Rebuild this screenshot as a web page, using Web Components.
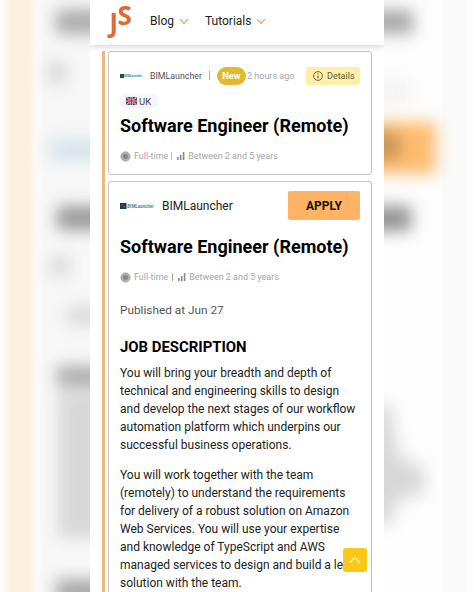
<!DOCTYPE html>
<html lang="en">
<head>
<meta charset="utf-8">
<title>Job details</title>
<style>
  body {
    margin: 0;
    width: 474px;
    height: 592px;
    overflow: hidden;
    background: #fdfdfd;
    font-family: Roboto, "Liberation Sans", sans-serif;
    color: #111;
  }
</style>
</head>
<body>
<job-page></job-page>

<script>
class BlurBackdrop extends HTMLElement {
  constructor() {
    super();
    this.attachShadow({ mode: 'open' });
    this.shadowRoot.innerHTML = `
      <style>
        :host { display: block; }
        svg { display: block; }
      </style>
      <svg width="474" height="592" viewBox="0 0 474 592">
        <defs>
          <filter id="soft" filterUnits="userSpaceOnUse" x="-40" y="-40" width="560" height="700" color-interpolation-filters="sRGB"><feGaussianBlur stdDeviation="8"/></filter>
          <filter id="edge" x="-50%" y="-5%" width="200%" height="110%" color-interpolation-filters="sRGB"><feGaussianBlur stdDeviation="3 0"/></filter>
        </defs>
        <rect width="474" height="592" fill="#fdfdfd"/>
        <rect x="38" width="60" height="592" fill="#f8f8f8" filter="url(#edge)"/>
        <rect x="6" y="-20" width="27" height="640" fill="#ffefe2" filter="url(#edge)"/>
        <rect x="442" width="25" height="592" fill="#fafafa"/>
        <g filter="url(#soft)">
          <rect x="56" y="10" width="60" height="24" fill="#aaa"/>
          <rect x="48" y="62" width="19" height="22" fill="#d8d8d8"/>
          <rect x="49" y="138" width="60" height="23" fill="#d8e5e9"/>
          <rect x="57" y="206" width="60" height="24" fill="#9a9a9a"/>
          <rect x="50" y="256" width="20" height="20" fill="#dadada"/>
          <rect x="67" y="306" width="40" height="19" fill="#dadada"/>
          <rect x="57" y="366" width="60" height="21" fill="#acacac"/>
          <rect x="58" y="392" width="60" height="146" fill="#d8d8d8"/>
          <rect x="56" y="579" width="60" height="30" fill="#aaa"/>
          <rect x="360" y="10" width="53" height="24" fill="#a8a8a8"/>
          <rect x="360" y="80" width="50" height="24" fill="#f4f4f4"/>
          <rect x="360" y="122" width="76" height="52" fill="#ffbc70"/>
          <rect x="360" y="132" width="40" height="28" fill="#ca9457"/>
          <rect x="360" y="206" width="51" height="25" fill="#929292"/>
          <path d="M360 406H391L398 455L424 468V493L398 500L391 524H360Z" fill="#d8d8d8"/>
        </g>
      </svg>
    `;
  }
}

class NavItem extends HTMLElement {
  constructor() {
    super();
    this.attachShadow({ mode: 'open' });
    this.shadowRoot.innerHTML = `
      <style>
        :host { display: flex; align-items: center; gap: 5px; font-size: 12px; color: #222; }
        svg { margin-top: 1px; }
      </style>
      <span><slot></slot></span>
      <svg width="10" height="7" viewBox="0 0 10 7"><path d="M1 1.2 5 5.4 9 1.2" fill="none" stroke="#e39a72" stroke-width="1.1"/></svg>
    `;
  }
}

class SiteHeader extends HTMLElement {
  constructor() {
    super();
    this.attachShadow({ mode: 'open' });
    this.shadowRoot.innerHTML = `
      <style>
        :host {
          display: flex;
          align-items: center;
          box-sizing: border-box;
          height: 45px;
          padding: 0 0 4px 17px;
          background: #fff;
          box-shadow: 0 1px 7px rgba(0, 0, 0, 0.2);
          position: relative;
        }
        .logo { display: block; width: 26px; height: 40px; margin-right: 17px; overflow: visible; }
        nav { display: flex; gap: 16px; }
      </style>
      <svg class="logo" viewBox="0 0 26 40" fill="#de6b35" font-family="Open Sans, Noto Sans, sans-serif" font-size="26" font-weight="700">
        <text x="2.4" y="31.2">J</text>
        <text x="10.6" y="23.8">S</text>
      </svg>
      <nav>
        <nav-item>Blog</nav-item>
        <nav-item>Tutorials</nav-item>
      </nav>
    `;
  }
}

class CompanyLogo extends HTMLElement {
  constructor() {
    super();
    this.attachShadow({ mode: 'open' });
    this.shadowRoot.innerHTML = `
      <style>
        :host { display: block; width: 35px; height: 6px; }
        svg { display: block; width: 100%; height: 100%; overflow: visible; }
      </style>
      <svg viewBox="0 0 35 6">
        <rect width="6.5" height="6" fill="#1e3f48"/>
        <path d="M1.6 1.4h1.6v1.4H1.6zM3.6 3.2h1.6v1.3H3.6z" fill="#55777f"/>
        <text x="7.3" y="5" font-size="5.4" font-weight="700" font-style="italic" fill="#3f8ba3" textLength="26.5" lengthAdjust="spacingAndGlyphs">BIMLauncher</text>
      </svg>
    `;
  }
}

class JobMeta extends HTMLElement {
  constructor() {
    super();
    this.attachShadow({ mode: 'open' });
    this.shadowRoot.innerHTML = `
      <style>
        :host { display: flex; align-items: center; height: 12px; font-size: 8.95px; line-height: 12px; color: #a6a6a6; white-space: nowrap; }
        .gear { margin-right: 3px; }
        .sep { width: 1px; height: 8px; margin: 0 5px 0 var(--sep-gap, 3px); background: var(--sep, #c4c4c4); }
        .bars { margin-right: 3px; }
      </style>
      <svg class="gear" width="11" height="11" viewBox="0 0 11 11">
        <circle cx="5.5" cy="5.5" r="4.7" fill="#b0b0b0" stroke="#a5a5a5" stroke-width="1" stroke-dasharray="1.3 .6"/>
        <circle cx="5.5" cy="5.5" r="2.4" fill="#858585" stroke="#8f8f8f" stroke-width=".8"/>
      </svg>
      <span>Full-time</span>
      <i class="sep"></i>
      <svg class="bars" width="8" height="8" viewBox="0 0 8 8" fill="#888"><path d="M0 5h1.6v3H0zM2.9 3h1.6v5H2.9zM5.8 0h1.6v8H5.8z"/></svg>
      <span>Between 2 and 5 years</span>
    `;
  }
}

class JobSummary extends HTMLElement {
  constructor() {
    super();
    this.attachShadow({ mode: 'open' });
    this.shadowRoot.innerHTML = `
      <style>
        :host {
          display: block;
          flex: none;
          box-sizing: border-box;
          height: 124px;
          padding: 14px 11px 0 11px;
          background: #fff;
          border: 1px solid #c6c6c6;
          border-radius: 3px;
        }
        .top { display: flex; align-items: center; height: 19px; font-size: 9px; white-space: nowrap; }
        company-logo { width: 23px; height: 4px; margin-right: 7px; }
        .name { width: 52px; font-size: 8.8px; color: #555; }
        .bar { width: 1px; height: 9px; margin: 0 7px; background: #aaa; }
        .new { height: 18px; width: 29px; border-radius: 9px; background: #e2b92b; color: #fff; font-size: 9.3px; font-weight: 700; line-height: 18px; text-align: center; }
        .ago { margin-left: 1px; color: #aaa; }
        .details { display: flex; align-items: center; gap: 4px; box-sizing: border-box; width: 54px; height: 18px; padding-left: 7px; margin-left: auto; border-radius: 2px; background: #fcefa8; color: #665d35; }
        .place { display: flex; align-items: center; gap: 2px; box-sizing: border-box; width: 38px; height: 14px; padding-left: 6px; margin-top: 9px; border-radius: 5px; background: #f6f5fa; font-size: 9.5px; color: #444; }
        h2 { margin: 7px 0 0; font-size: 18px; line-height: 22px; font-weight: 700; color: #000; white-space: nowrap; }
        job-meta { margin-top: 13px; }
      </style>
      <div class="top">
        <company-logo></company-logo>
        <span class="name">BIMLauncher</span>
        <i class="bar"></i>
        <span class="new">New</span>
        <span class="ago">2 hours ago</span>
        <span class="details">
          <svg width="10" height="10" viewBox="0 0 10 10" fill="none" stroke="#5d552f"><circle cx="5" cy="5" r="4.4" stroke-width=".9"/><path d="M5 4.4v3M5 2.3v1.1"/></svg>
          <span>Details</span>
        </span>
      </div>
      <div class="place">
        <svg width="11" height="8" viewBox="0 0 11 8">
          <rect width="11" height="8" rx="1" fill="#34417c"/>
          <path d="M0 0 11 8M11 0 0 8" stroke="#fff" stroke-width="1.3"/>
          <path d="M0 0 11 8M11 0 0 8" stroke="#c8344c" stroke-width=".7"/>
          <path d="M5.5 0v8M0 4h11" stroke="#fff" stroke-width="2.1"/>
          <path d="M5.5 0v8M0 4h11" stroke="#c8344c" stroke-width="1.4"/>
        </svg>
        <span>UK</span>
      </div>
      <h2>Software Engineer (Remote)</h2>
      <job-meta></job-meta>
    `;
  }
}

class JobDetail extends HTMLElement {
  constructor() {
    super();
    this.attachShadow({ mode: 'open' });
    this.parrafos = [
      [
        'You will bring your breadth and depth of',
        'technical and engineering skills to design',
        'and develop the next stages of our workflow',
        'automation platform which underpins our',
        'successful business operations.'
      ],
      [
        'You will work together with the team',
        '(remotely) to understand the requirements',
        'for delivery of a robust solution on Amazon',
        'Web Services. You will use your expertise',
        'and knowledge of TypeScript and AWS',
        'managed services to design and build a le',
        'solution with the team.'
      ]
    ];
  }

  connectedCallback() {
    this.render();
  }

  render = () => {
    const texto = this.parrafos.map(p => `<p>${p.join('<br>')}</p>`).join('');

    this.shadowRoot.innerHTML = `
      <style>
        :host {
          display: block;
          flex: 1;
          box-sizing: border-box;
          padding: 9px 11px 0 11px;
          background: #fff;
          border: 1px solid #c6c6c6;
          border-bottom: 0;
          border-radius: 3px 3px 0 0;
        }
        .top { display: flex; align-items: center; height: 29px; font-size: 12px; color: #222; }
        company-logo { margin-right: 7px; }
        button { width: 72px; height: 29px; margin-left: auto; padding: 0; border: 0; border-radius: 2px; background: #ffb465; font: 700 12px Roboto, sans-serif; color: #111; }
        h2 { margin: 16px 0 0; font-size: 18px; line-height: 22px; font-weight: 700; color: #000; white-space: nowrap; }
        job-meta { --sep: #cf9c82; --sep-gap: 4px; margin-top: 13px; }
        .date { margin-top: 19px; font-size: 11.8px; line-height: 16px; color: #555; }
        h3 { margin: 20px 0 0; font-size: 14.9px; line-height: 18px; font-weight: 700; color: #000; }
        p { margin: 8px 0 0; font-size: 12px; line-height: 18px; color: #222; white-space: nowrap; }
        p + p { margin-top: 12px; }
      </style>
      <div class="top">
        <company-logo></company-logo>
        <span>BIMLauncher</span>
        <button>APPLY</button>
      </div>
      <h2>Software Engineer (Remote)</h2>
      <job-meta></job-meta>
      <div class="date">Published at Jun 27</div>
      <h3>JOB DESCRIPTION</h3>
      ${texto}
    `;
  }
}

class ScrollTop extends HTMLElement {
  constructor() {
    super();
    this.attachShadow({ mode: 'open' });
    this.shadowRoot.innerHTML = `
      <style>
        :host { display: flex; align-items: center; justify-content: center; width: 24px; height: 24px; border-radius: 3px; background: #fac817; }
      </style>
      <svg width="12" height="8" viewBox="0 0 12 8"><path d="M1 6.5 6 1.5l5 5" fill="none" stroke="#fff0ae" stroke-width="1.3"/></svg>
    `;
  }
}

class JobPage extends HTMLElement {
  constructor() {
    super();
    this.attachShadow({ mode: 'open' });
    this.shadowRoot.innerHTML = `
      <style>
        :host { display: block; position: relative; height: 592px; overflow: hidden; }
        blur-backdrop { position: absolute; inset: 0; }
        .screen { position: relative; width: 294px; height: 592px; margin-left: 90px; overflow: hidden; background: #fff; }
        .list { display: flex; flex-direction: column; gap: 6px; box-sizing: border-box; min-height: 539px; margin: 6px 12px 0 12px; padding-left: 3px; border-left: 3px solid #f0b880; }
        scroll-top { position: absolute; right: 17px; bottom: 20px; }
      </style>
      <blur-backdrop></blur-backdrop>
      <div class="screen">
        <site-header></site-header>
        <div class="list">
          <job-summary></job-summary>
          <job-detail></job-detail>
        </div>
        <scroll-top></scroll-top>
      </div>
    `;
  }
}

customElements.define('blur-backdrop', BlurBackdrop);
customElements.define('nav-item', NavItem);
customElements.define('site-header', SiteHeader);
customElements.define('company-logo', CompanyLogo);
customElements.define('job-meta', JobMeta);
customElements.define('job-summary', JobSummary);
customElements.define('job-detail', JobDetail);
customElements.define('scroll-top', ScrollTop);
customElements.define('job-page', JobPage);
</script>
</body>
</html>
